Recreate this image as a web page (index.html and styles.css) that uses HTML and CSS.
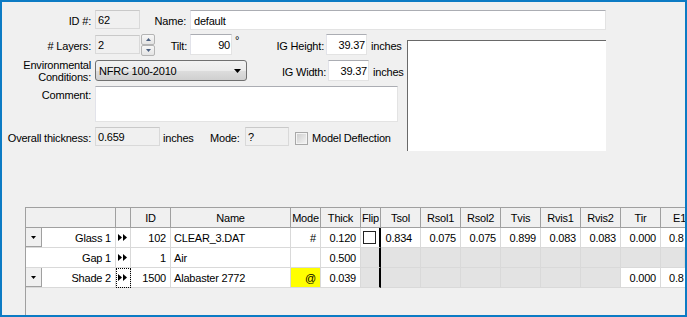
FILE: index.html
```html
<!DOCTYPE html>
<html>
<head>
<meta charset="utf-8">
<title>Layer</title>
<link rel="stylesheet" href="styles.css">
</head>
<body>
<div class="win">
  <div class="form">
    <div class="row r1">
      <span class="lbl l-main">ID #:</span>
      <span class="fld ro f-id">62</span>
      <span class="lbl l-name">Name:</span>
      <span class="fld f-name">default</span>
    </div>
    <div class="main">
      <div class="left">
        <div class="row r2">
          <span class="lbl l-main">#&nbsp;Layers:</span>
          <span class="fld ro f-layers">2</span>
          <span class="spin">
            <span class="sb"><svg width="5" height="3" viewBox="0 0 5 3"><polygon points="2.5,0 5,3 0,3" fill="#4a5f80"/></svg></span>
            <span class="sb"><svg width="5" height="3" viewBox="0 0 5 3"><polygon points="0,0 5,0 2.5,3" fill="#4a5f80"/></svg></span>
          </span>
          <span class="lbl l-tilt">Tilt:</span>
          <span class="fld num f-tilt">90</span>
          <span class="deg">°</span>
          <span class="lbl l-igh">IG Height:</span>
          <span class="fld num f-ig">39.37</span>
          <span class="unit">inches</span>
        </div>
        <div class="row r3">
          <span class="lbl l-main two">Environmental<br>Conditions:</span>
          <span class="combo"><span class="combo-txt">NFRC 100-2010</span><svg width="7" height="4" viewBox="0 0 7 4"><polygon points="0,0 7,0 3.5,4" fill="#000"/></svg></span>
          <span class="lbl l-igw">IG Width:</span>
          <span class="fld num f-ig">39.37</span>
          <span class="unit">inches</span>
        </div>
        <div class="row r4">
          <span class="lbl l-main top">Comment:</span>
          <span class="fld f-comment"></span>
        </div>
        <div class="row r5">
          <span class="lbl l-main">Overall thickness:</span>
          <span class="fld ro f-thick">0.659</span>
          <span class="unit u-thick">inches</span>
          <span class="lbl l-mode">Mode:</span>
          <span class="fld ro f-mode">?</span>
          <span class="chk-dis"><span></span></span>
          <span class="lbl l-defl">Model Deflection</span>
        </div>
      </div>
      <div class="box"></div>
    </div>
  </div>

  <div class="grid">
    <div class="tr th-row">
      <div class="th"></div>
      <div class="th"></div>
      <div class="th">ID</div>
      <div class="th">Name</div>
      <div class="th">Mode</div>
      <div class="th">Thick</div>
      <div class="th">Flip</div>
      <div class="th">Tsol</div>
      <div class="th">Rsol1</div>
      <div class="th">Rsol2</div>
      <div class="th">Tvis</div>
      <div class="th">Rvis1</div>
      <div class="th">Rvis2</div>
      <div class="th">Tir</div>
      <div class="th e1h">E1</div>
    </div>

    <div class="tr">
      <div class="td c0"><span class="dd"><svg width="5" height="3" viewBox="0 0 5 3"><polygon points="0,0 5,0 2.5,3" fill="#000"/></svg></span><span class="rl">Glass 1</span></div>
      <div class="td c1"><svg class="ff" width="10" height="7" viewBox="0 0 10 7"><polygon points="0,0 4,3.5 0,7" fill="#000"/><polygon points="5,0 9,3.5 5,7" fill="#000"/></svg></div>
      <div class="td">102</div>
      <div class="td l">CLEAR_3.DAT</div>
      <div class="td">#</div>
      <div class="td">0.120</div>
      <div class="td flip"><span class="chk"></span></div>
      <div class="td tsol">0.834</div>
      <div class="td">0.075</div>
      <div class="td">0.075</div>
      <div class="td">0.899</div>
      <div class="td">0.083</div>
      <div class="td">0.083</div>
      <div class="td">0.000</div>
      <div class="td e1">0.8</div>
    </div>

    <div class="tr">
      <div class="td c0"><span class="rl">Gap 1</span></div>
      <div class="td c1"><svg class="ff" width="10" height="7" viewBox="0 0 10 7"><polygon points="0,0 4,3.5 0,7" fill="#000"/><polygon points="5,0 9,3.5 5,7" fill="#000"/></svg></div>
      <div class="td">1</div>
      <div class="td l">Air</div>
      <div class="td"></div>
      <div class="td">0.500</div>
      <div class="td flip dis"></div>
      <div class="td dis"></div>
      <div class="td dis"></div>
      <div class="td dis"></div>
      <div class="td dis"></div>
      <div class="td dis"></div>
      <div class="td dis"></div>
      <div class="td dis"></div>
      <div class="td dis"></div>
    </div>

    <div class="tr">
      <div class="td c0"><span class="dd"><svg width="5" height="3" viewBox="0 0 5 3"><polygon points="0,0 5,0 2.5,3" fill="#000"/></svg></span><span class="rl">Shade 2</span></div>
      <div class="td c1 focus"><svg class="ff" width="10" height="7" viewBox="0 0 10 7"><polygon points="0,0 4,3.5 0,7" fill="#000"/><polygon points="5,0 9,3.5 5,7" fill="#000"/></svg></div>
      <div class="td">1500</div>
      <div class="td l">Alabaster 2772</div>
      <div class="td yel">@</div>
      <div class="td">0.039</div>
      <div class="td flip dis"></div>
      <div class="td dis"></div>
      <div class="td dis"></div>
      <div class="td dis"></div>
      <div class="td dis"></div>
      <div class="td dis"></div>
      <div class="td dis"></div>
      <div class="td">0.000</div>
      <div class="td e1">0.8</div>
    </div>
  </div>
</div>
</body>
</html>
```

FILE: styles.css
```css
* { box-sizing: border-box; margin: 0; padding: 0; }
html, body { width: 687px; height: 317px; overflow: hidden; background: #f0f0f0; }
body {
  font-family: "Liberation Sans", Arial, sans-serif;
  font-size: 11px;
  letter-spacing: -0.2px;
  color: #000;
}
.win {
  width: 687px;
  height: 317px;
  border: 2px solid #0c7bc4;
  background: #f0f0f0;
  display: flex;
  flex-direction: column;
  overflow: hidden;
}
.form { padding-top: 8px; }
.row { display: flex; align-items: stretch; }
.r1 { height: 20px; }
.r2 { height: 22px; margin-top: 4px; }
.r3 { height: 21px; margin-top: 4px; }
.r4 { height: 36px; margin-top: 5px; }
.r5 { height: 19px; margin-top: 5px; }

.lbl {
  display: flex;
  align-items: center;
  justify-content: flex-end;
  white-space: nowrap;
  padding-top: 2px;
}
.l-main { width: 89px; }
.l-main.two { line-height: 12px; text-align: right; margin-top: -2px; height: 25px; padding-top: 0; }
.l-main.top { align-items: flex-start; padding-top: 3px; }
.l-name { width: 46px; }
.l-tilt { width: 32px; }
.l-igh { width: 83px; }
.l-igw { width: 79px; }
.l-mode { width: 31px; justify-content: flex-start; }
.l-defl { margin-left: 4px; justify-content: flex-start; }

.fld {
  display: flex;
  align-items: center;
  background: #fff;
  border: 1px solid #e3e3e3;
  border-top-color: #abadb3;
  border-left-color: #e2e3ea;
  padding: 1px 2px 0 2px;
  white-space: nowrap;
  margin-left: 4px;
}
.fld.ro { background: #f0f0f0; border-color: #d9d9d9; border-top-color: #c9c9c9; }
.fld.num { justify-content: flex-end; padding-right: 1px; }
.f-id { width: 45px; height: 19px; }
.f-name { width: 416px; padding-left: 3px; }
.f-layers { width: 45px; height: 19px; margin-top: 1px; }
.f-tilt { width: 42px; height: 21px; margin-left: 3px; }
.f-ig { width: 41px; margin-left: 2px; }
.r2 .f-ig { height: 21px; }
.f-comment { width: 303px; }
.f-thick { width: 65px; }
.f-mode { width: 44px; }

.spin { display: flex; flex-direction: column; margin-left: 1px; width: 14px; }
.sb {
  height: 11px;
  border: 1px solid #b4b4b4;
  border-radius: 2px;
  background: linear-gradient(#f7f7f7, #e4e4e4);
  display: flex;
  align-items: center;
  justify-content: center;
}
.deg { width: 9px; padding-left: 3px; line-height: 12px; }
.unit { margin-left: 4px; display: flex; align-items: center; padding-top: 2px; }
.u-thick { width: 47px; margin-left: 3px; }

.combo {
  margin-left: 4px;
  width: 152px;
  border: 1px solid #707070;
  border-radius: 3px;
  background: linear-gradient(#f2f2f2 0%, #ebebeb 50%, #dddddd 51%, #cfcfcf 100%);
  display: flex;
  align-items: center;
  justify-content: space-between;
  padding: 1px 5px 0 3px;
}
.combo svg { margin-top: -1px; }

.chk-dis {
  width: 13px; height: 13px;
  margin: 5px 0 0 6px;
  border: 1px solid #a8a8a8;
  background: #f4f4f4;
  padding: 1px;
}
.chk-dis span { display: block; width: 100%; height: 100%; background: linear-gradient(135deg, #cfcfcf, #f2f2f2); }

.main { display: flex; align-items: flex-start; }
.left { width: 405px; }
.box {
  margin-top: 10px;
  width: 199px;
  height: 111px;
  background: #fff;
  border-top: 1px solid #696969;
  border-left: 1px solid #696969;
}

/* grid */
.grid {
  flex: 1;
  margin: 56px 0 0 23px;
  border-left: 1px solid #a0a0a0;
  overflow: hidden;
}
.tr {
  display: grid;
  grid-template-columns: 90px 15px 40px 120px 30px 40px 20px repeat(7, 40px) 24px;
  height: 20px;
  width: max-content;
}
.th-row { border-top: 1px solid #a0a0a0; height: 21px; }
.th {
  border-right: 1px solid #a0a0a0;
  border-bottom: 1px solid #a0a0a0;
  display: flex;
  align-items: center;
  justify-content: center;
  padding-top: 1px;
}
.th.e1h { justify-content: flex-start; padding-left: 12px; border-right: 0; }
.td {
  background: #fff;
  border-right: 1px solid #d9d9d9;
  border-bottom: 1px solid #d9d9d9;
  display: flex;
  align-items: center;
  justify-content: flex-end;
  padding: 1px 4px 0 0;
  white-space: nowrap;
  overflow: hidden;
}
.td.e1 { justify-content: flex-start; padding: 1px 0 0 8px; border-right: 0; }
.td.l { justify-content: flex-start; padding-left: 3px; }
.td.dis { background: #e3e3e3; }
.td.yel { background: #ffff00; }
.td.tsol { padding-right: 8px; }
.td.flip { border-right: 2px solid #000; justify-content: center; padding: 0 1px 0 0; }
.td.c0 { padding: 0; justify-content: space-between; }
.dd {
  width: 16px;
  height: 19px;
  background: #f0f0f0;
  border-right: 1px solid #a0a0a0;
  border-bottom: 1px solid #a0a0a0;
  display: flex;
  align-items: center;
  justify-content: center;
}
.rl { margin-left: auto; padding: 1px 4px 0 0; }
.td.c1 { padding: 0 0 0 2px; justify-content: flex-start; }
.td.focus { outline: 1px dotted #000; outline-offset: -1px; }
.chk { width: 13px; height: 13px; border: 1px solid #222; background: #fff; }
```
